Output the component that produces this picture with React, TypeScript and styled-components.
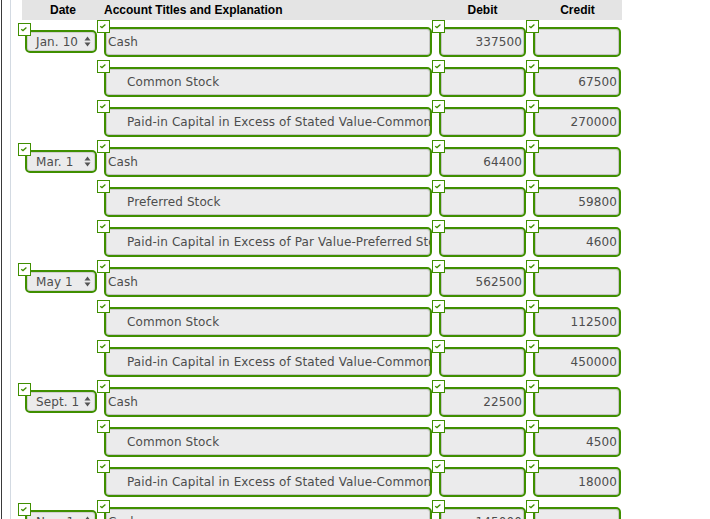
import styled, { createGlobalStyle } from "styled-components";

const Global = createGlobalStyle`
  body {
    margin: 0;
    background: #fff;
    font-family: "DejaVu Sans", Verdana, sans-serif;
    overflow: hidden;
  }
`;

const GREEN = "#3f8f00";

const Shell = styled.div`
    margin-left: 1px;
    border-left: 1px solid #3a3a3a;
    padding-left: 8px;
    min-height: 100vh;
`;

const Panel = styled.div`
    border-left: 1px solid #d3dae2;
    padding-left: 7px;
    min-height: 100vh;
`;

const Table = styled.div`
    display: flex;
    flex-direction: column;
    width: 610px;
`;

const Header = styled.div`
    display: flex;
    margin-left: 4px;
    width: 600px;
    height: 20px;
    background: #e4e4e4;
    font-family: "Liberation Sans", Arial, sans-serif;
    font-weight: bold;
    font-size: 12px;
    color: #000;
`;

const HeadCell = styled.div<{ $w: number; $align?: string }>`
    width: ${(p) => p.$w}px;
    padding-left: 7px;
    box-sizing: border-box;
    text-align: ${(p) => p.$align || "center"};
    line-height: 21px;
`;

const Row = styled.div`
    display: flex;
    align-items: flex-start;
    height: 40px;
`;

const Slot = styled.div<{ $w: number; $top?: number }>`
    position: relative;
    width: ${(p) => p.$w}px;
    margin-top: ${(p) => p.$top || 0}px;
    padding: 7px 0 0 7px;
    box-sizing: border-box;
    flex-shrink: 0;
`;

const Badge = styled.div`
    position: absolute;
    top: 0;
    left: 0;
    width: 13px;
    height: 13px;
    box-sizing: border-box;
    border: 1px solid ${GREEN};
    background: #fff;
    z-index: 1;
    svg { display: block; }
`;

const Box = styled.div<{ $right?: boolean; $indent?: boolean }>`
    height: 30px;
    box-sizing: border-box;
    border: 2px solid ${GREEN};
    border-radius: 5px;
    background: #ebebec;
    box-shadow: inset 0 0 0 1px #c6c6c6;
    font-size: 12px;
    letter-spacing: 0.1px;
    color: #4d4d4d;
    line-height: 26px;
    white-space: nowrap;
    overflow: hidden;
    text-align: ${(p) => (p.$right ? "right" : "left")};
    padding: ${(p) => (p.$right ? "0 2px 0 0" : p.$indent ? "0 0 0 21px" : "0 0 0 2px")};
`;

const Select = styled.div`
    display: flex;
    align-items: center;
    justify-content: space-between;
    height: 23px;
    box-sizing: border-box;
    border: 2px solid ${GREEN};
    border-radius: 5px;
    background: #ebebec;
    box-shadow: inset 0 0 0 1px #cfcfcf;
    font-size: 12px;
    letter-spacing: 0.1px;
    color: #4d4d4d;
    padding: 0 4px 0 9px;
`;

const Check = () => (
    <Badge>
        <svg width="11" height="11" viewBox="0 0 11 11">
            <polyline points="2.2,5.2 4,6.6 7.4,3.6" fill="none" stroke={GREEN} strokeWidth="1.3" />
        </svg>
    </Badge>
);

const Arrows = () => (
    <svg width="7" height="11" viewBox="0 0 7 11">
        <polygon points="3.5,0.5 6.5,4.5 0.5,4.5" fill="#555" />
        <polygon points="3.5,10.5 6.5,6.5 0.5,6.5" fill="#555" />
    </svg>
);

type Entry = { date?: string; title: string; indent?: boolean; debit?: string; credit?: string };

const entries: Entry[] = [
    { date: "Jan. 10", title: "Cash", debit: "337500" },
    { title: "Common Stock", indent: true, credit: "67500" },
    { title: "Paid-in Capital in Excess of Stated Value-Common Stock", indent: true, credit: "270000" },
    { date: "Mar. 1", title: "Cash", debit: "64400" },
    { title: "Preferred Stock", indent: true, credit: "59800" },
    { title: "Paid-in Capital in Excess of Par Value-Preferred Stock", indent: true, credit: "4600" },
    { date: "May 1", title: "Cash", debit: "562500" },
    { title: "Common Stock", indent: true, credit: "112500" },
    { title: "Paid-in Capital in Excess of Stated Value-Common Stock", indent: true, credit: "450000" },
    { date: "Sept. 1", title: "Cash", debit: "22500" },
    { title: "Common Stock", indent: true, credit: "4500" },
    { title: "Paid-in Capital in Excess of Stated Value-Common Stock", indent: true, credit: "18000" },
    { date: "Nov. 1", title: "Cash", debit: "145000" },
];

export default function App() {
    return (
        <>
            <Global />
            <Shell>
                <Panel>
                    <Table>
                        <Header>
                            <HeadCell $w={75}>Date</HeadCell>
                            <HeadCell $w={335} $align="left">Account Titles and Explanation</HeadCell>
                            <HeadCell $w={94}>Debit</HeadCell>
                            <HeadCell $w={96}>Credit</HeadCell>
                        </Header>
                        {entries.map((e, i) => (
                            <Row key={i}>
                                {e.date ? (
                                    <Slot $w={79} $top={3}>
                                        <Check />
                                        <Select>
                                            <span>{e.date}</span>
                                            <Arrows />
                                        </Select>
                                    </Slot>
                                ) : (
                                    <Slot $w={79} />
                                )}
                                <Slot $w={335}>
                                    <Check />
                                    <Box $indent={e.indent}>{e.title}</Box>
                                </Slot>
                                <Slot $w={94}>
                                    <Check />
                                    <Box $right>{e.debit}</Box>
                                </Slot>
                                <Slot $w={95}>
                                    <Check />
                                    <Box $right>{e.credit}</Box>
                                </Slot>
                            </Row>
                        ))}
                    </Table>
                </Panel>
            </Shell>
        </>
    );
}
